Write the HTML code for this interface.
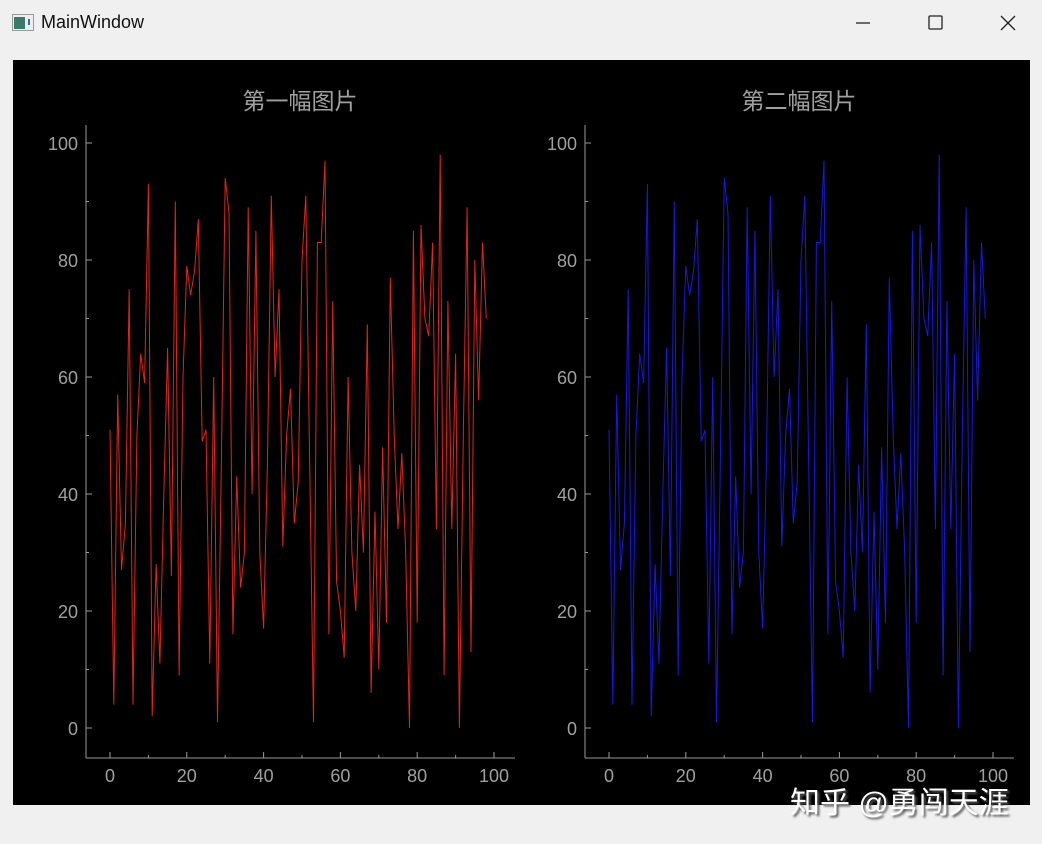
<!DOCTYPE html>
<html><head><meta charset="utf-8"><style>
html,body{margin:0;padding:0;width:1042px;height:844px;background:#f0f0f0;overflow:hidden;font-family:"Liberation Sans","Noto Sans CJK SC",sans-serif}
.title{position:absolute;left:0;top:0;width:1042px;height:46px;}
.t{position:absolute;left:41px;top:12px;font-size:18px;color:#111}
#plot{position:absolute;left:13px;top:60px;width:1017px;height:745px;background:#000}
.wm{position:absolute;left:790px;top:778px;font-size:30px;color:#fff;text-shadow:2px 2px 2px #555;font-family:"Liberation Sans","Noto Sans CJK SC",sans-serif}
</style></head><body>
<div class="title">
<svg style="position:absolute;left:12px;top:14px" width="22" height="18"><rect x="0.5" y="0.5" width="21" height="16" fill="#eee" stroke="#999"/><rect x="2" y="3" width="11" height="12" fill="#3a7a6a"/><rect x="16" y="5" width="2" height="6" fill="#3a6a9a"/></svg>
<div class="t">MainWindow</div>
<svg style="position:absolute;left:850px;top:12px" width="180" height="24" stroke="#222" stroke-width="1.3" fill="none">
<line x1="6" y1="11" x2="20" y2="11"/><rect x="79" y="4" width="13" height="13" rx="1"/><line x1="151" y1="4" x2="165" y2="18"/><line x1="165" y1="4" x2="151" y2="18"/></svg>
</div>
<svg id="plot" width="1017" height="745" viewBox="13 60 1017 745"></svg>
<div class="wm">知乎 @勇闯天涯</div>
<script>
var d=[51,4,57,27,35,75,4,50,64,59,93,2,28,11,40,65,26,90,9,60,79,74,78,87,49,51,11,60,1,46,94,88,16,43,24,30,89,40,85,30,17,45,91,60,75,31,50,58,35,42,80,91,45,1,83,83,97,16,73,25,20,12,60,30,20,45,30,69,6,37,10,48,18,77,50,34,47,30,0,85,18,86,70,67,83,34,98,9,73,34,64,0,50,89,13,80,56,83,70];
var s='';
function ax(ox,title,col){
 var x0=ox+24,sx=3.84,y0=728,sy=5.85,g='';
 g+='<line x1="'+ox+'" y1="125" x2="'+ox+'" y2="758" stroke="#999"/>';
 g+='<line x1="'+ox+'" y1="758" x2="'+(ox+429)+'" y2="758" stroke="#999"/>';
 for(var v=0;v<=100;v+=10){var y=y0-v*sy;g+='<line x1="'+ox+'" y1="'+y+'" x2="'+(ox+(v%20?3:6))+'" y2="'+y+'" stroke="#999"/>';
  if(v%20==0)g+='<text x="'+(ox-8)+'" y="'+(y+7)+'" text-anchor="end" font-size="18" fill="#a0a0a0">'+v+'</text>';}
 for(var v=0;v<=100;v+=10){var x=x0+v*sx;g+='<line x1="'+x+'" y1="758" x2="'+x+'" y2="'+(v%20?755:752)+'" stroke="#999"/>';
  if(v%20==0)g+='<text x="'+x+'" y="782" text-anchor="middle" font-size="18" fill="#a0a0a0">'+v+'</text>';}
 g+='<text x="'+(ox+214)+'" y="109" text-anchor="middle" font-size="23" fill="#a0a0a0">'+title+'</text>';
 var p=d.map(function(v,i){return (x0+i*sx).toFixed(1)+','+(y0-v*sy).toFixed(1)}).join(' ');
 g+='<polyline points="'+p+'" fill="none" stroke="'+col+'" stroke-width="1"/>';
 return g;}
s=ax(86,'第一幅图片','#e0261a')+ax(585,'第二幅图片','#1818e0');
document.getElementById('plot').innerHTML=s;
</script>
</body></html>
